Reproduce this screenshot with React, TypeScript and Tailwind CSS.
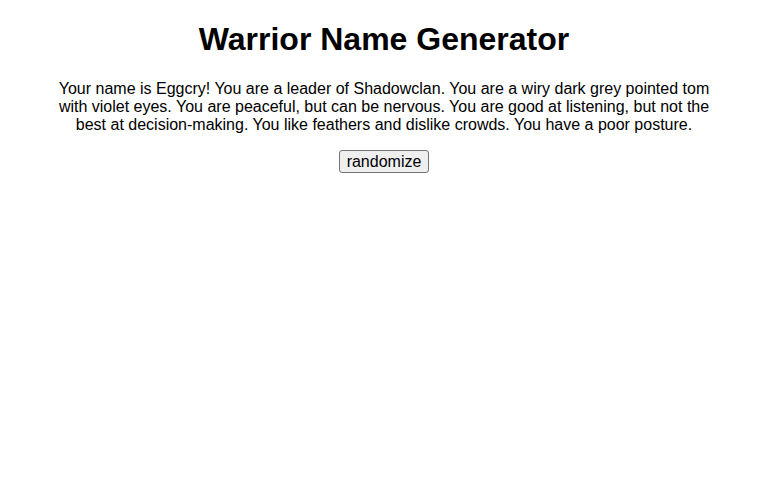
export default function App() {
  return (
    <div className="px-2 text-center text-black bg-white min-h-[480px]" style={{ fontFamily: '"Liberation Sans", Arial, sans-serif' }}>
      <div className="pt-[21.44px]">
        <h1 className="text-[32px] font-bold leading-[normal] mb-[21.44px]">Warrior Name Generator</h1>
        <p className="text-[16px] leading-[18px] mb-[16px] max-w-[664px] mx-auto">
          Your name is Eggcry! You are a leader of Shadowclan. You are a wiry dark grey pointed tom with violet eyes. You are peaceful, but can be nervous. You are good at listening, but not the best at decision-making. You like feathers and dislike crowds. You have a poor posture.
        </p>
        <button className="text-[16px] leading-[19px] px-[7px] py-[1px] border border-[#767676] rounded-[3px] bg-[#efefef] text-black">
          randomize
        </button>
      </div>
    </div>
  );
}
